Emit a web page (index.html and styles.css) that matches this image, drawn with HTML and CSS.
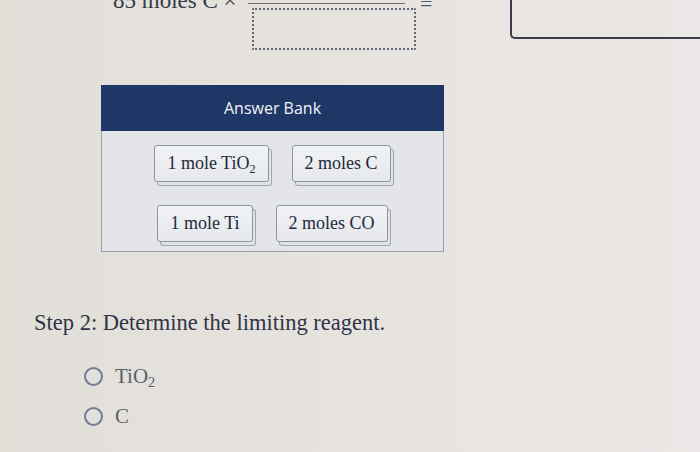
FILE: index.html
```html
<!DOCTYPE html>
<html>
<head>
<meta charset="utf-8">
<link rel="stylesheet" href="styles.css">
</head>
<body>
<div class="page">
  <div class="top">
    <div class="eq-text">85 moles C ×</div>
    <div class="fraction">
      <div class="frac-line"></div>
      <div class="drop-box"></div>
    </div>
    <div class="equals">=</div>
    <div class="result-box"></div>
  </div>

  <div class="bank">
    <div class="bank-head">Answer Bank</div>
    <div class="bank-body">
      <div class="chip-row">
        <div class="chip"><span>1 mole TiO<sub>2</sub></span></div>
        <div class="chip"><span>2 moles C</span></div>
      </div>
      <div class="chip-row">
        <div class="chip"><span>1 mole Ti</span></div>
        <div class="chip"><span>2 moles CO</span></div>
      </div>
    </div>
  </div>

  <div class="step">Step 2: Determine the limiting reagent.</div>

  <div class="options">
    <div class="option"><span class="radio"></span><span class="opt-label">TiO<sub>2</sub></span></div>
    <div class="option"><span class="radio"></span><span class="opt-label">C</span></div>
  </div>
</div>
</body>
</html>
```

FILE: styles.css
```css
html, body {
  margin: 0;
  padding: 0;
}
body {
  width: 700px;
  height: 452px;
  overflow: hidden;
  background: linear-gradient(90deg, #e2dfd9 0%, #e6e3df 50%, #ebe7e6 100%);
  font-family: "Liberation Serif", "Times New Roman", serif;
  color: #2c3344;
}
.page {
  display: flex;
  flex-direction: column;
}
.top {
  display: grid;
  grid-template-columns: 135px 168px 94px 1fr;
  padding-left: 113px;
  margin-top: -20px;
  height: 70px;
}
.eq-text {
  font-size: 23px;
  line-height: 20px;
  padding-top: 11px;
  color: #333846;
  white-space: nowrap;
}
.fraction {
  display: flex;
  flex-direction: column;
  padding-top: 23px;
}
.frac-line {
  width: 157px;
  height: 0;
  border-top: 1px solid #6a6e78;
}
.drop-box {
  margin-top: 4px;
  margin-left: 4px;
  width: 160px;
  height: 38px;
  border: 2px dotted #5f6777;
  border-radius: 2px;
}
.equals {
  font-size: 22px;
  line-height: 20px;
  padding-top: 14px;
  padding-left: 4px;
  color: #555a66;
}
.result-box {
  height: 57px;
  border-left: 2px solid #3b3e4a;
  border-bottom: 2px solid #3b3e4a;
  border-bottom-left-radius: 5px;
}
.bank {
  margin-top: 35px;
  margin-left: 101px;
  width: 343px;
}
.bank-head {
  height: 46px;
  background: #1f3766;
  color: #f2f4f8;
  font-family: "Open Sans", "Liberation Sans", sans-serif;
  font-size: 16px;
  display: flex;
  align-items: center;
  justify-content: center;
}
.bank-body {
  height: 121px;
  box-sizing: border-box;
  border: 1px solid #9ca1ad;
  border-top: none;
  background: #e3e5e9;
  display: flex;
  flex-direction: column;
  gap: 23px;
  padding-top: 14px;
}
.chip-row {
  display: flex;
  justify-content: center;
  gap: 23px;
}
.chip {
  height: 37px;
  box-sizing: border-box;
  padding: 0 12px;
  display: flex;
  align-items: center;
  font-size: 18px;
  color: #24293a;
  background: linear-gradient(180deg, #f0f2f5 0%, #e6e8ec 100%);
  border: 1px solid #8f95a3;
  border-radius: 3px;
  box-shadow: 3px 4px 0 -1px #e0e2e7, 3px 4px 0 0 #a0a6b2;
}
.chip sub, .opt-label sub {
  font-size: 0.68em;
  line-height: 0;
  vertical-align: -0.3em;
}
.step {
  margin-top: 58px;
  margin-left: 34px;
  font-size: 22.5px;
  line-height: 26px;
  color: #2e3446;
}
.options {
  margin-top: 29px;
  margin-left: 84px;
  display: flex;
  flex-direction: column;
  gap: 18px;
}
.option {
  display: flex;
  align-items: center;
  gap: 12px;
  height: 22px;
}
.radio {
  width: 15px;
  height: 15px;
  border: 2px solid #6f7d92;
  border-radius: 50%;
}
.opt-label {
  font-size: 21px;
  color: #5a5f6a;
}
```
